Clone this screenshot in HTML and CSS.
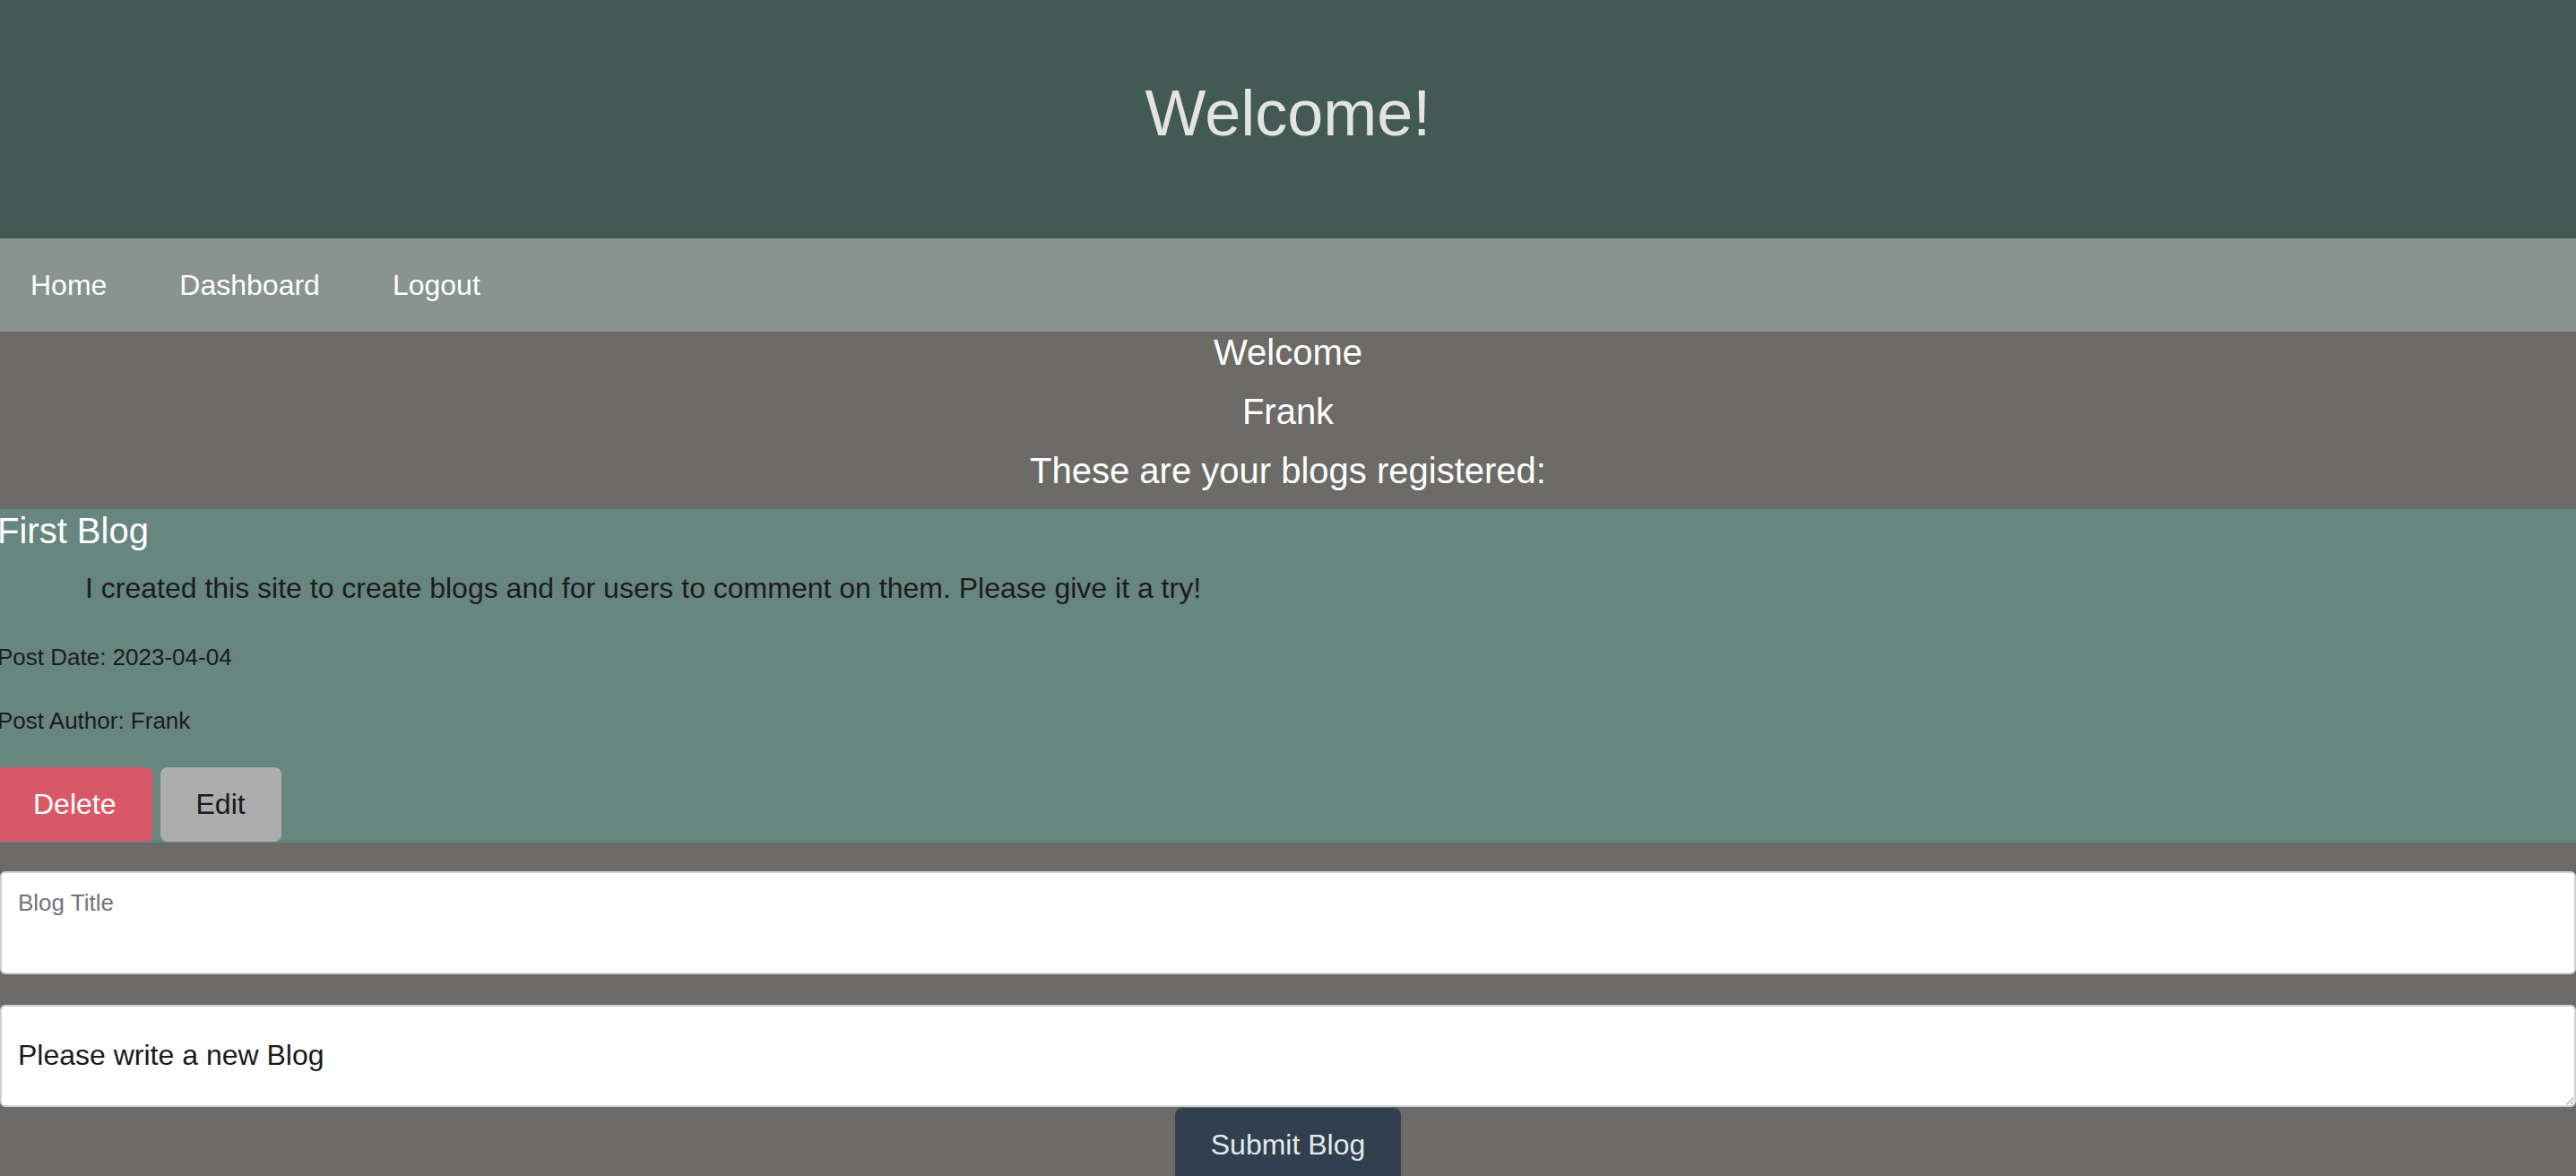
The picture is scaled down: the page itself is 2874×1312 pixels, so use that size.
FILE: index.html
```html
<!DOCTYPE html>
<html lang="en">
<head>
    <meta charset="UTF-8">
    <meta name="viewport" content="width=device-width, initial-scale=1.0">
    <title>Dashboard</title>
    <link rel="stylesheet" href="styles.css">
</head>
<body>
    <header class="site-header">
        <h1>Welcome!</h1>
    </header>

    <nav class="site-nav">
        <a href="#">Home</a>
        <a href="#">Dashboard</a>
        <a href="#">Logout</a>
    </nav>

    <section class="greeting">
        <h2>Welcome</h2>
        <h2>Frank</h2>
        <h2>These are your blogs registered:</h2>
    </section>

    <div class="blog-card">
        <div class="blog-inner">
            <h2 class="blog-title">First Blog</h2>
            <p class="blog-body">I created this site to create blogs and for users to comment on them. Please give it a try!</p>
            <p class="blog-meta date">Post Date: 2023-04-04</p>
            <p class="blog-meta author">Post Author: Frank</p>
            <div class="blog-actions">
                <button type="button" class="btn btn-delete">Delete</button>
                <button type="button" class="btn btn-edit">Edit</button>
            </div>
        </div>
    </div>

    <form class="new-blog">
        <input type="text" class="title-input" placeholder="Blog Title">
        <textarea class="body-input">Please write a new Blog</textarea>
        <button type="button" class="btn btn-submit">Submit Blog</button>
    </form>
</body>
</html>
```

FILE: styles.css
```css
body {
    margin: 0;
    font-family: "Liberation Sans", Arial, sans-serif;
    background-color: #6c6b67;
    overflow: hidden;
}
.site-header {
    background-color: #425a53;
    height: 266px;
    padding-top: 85px;
    box-sizing: border-box;
    text-align: center;
}
.site-header h1 {
    margin: 0;
    font-size: 72px;
    font-weight: normal;
    color: #e3e3e3;
}
.site-nav {
    display: flex;
    align-items: center;
    gap: 81px;
    height: 104px;
    padding-left: 34px;
    background-color: #89938f;
}
.site-nav a {
    color: white;
    font-size: 32px;
    text-decoration: none;
}
.greeting {
    text-align: center;
}
.greeting h2 {
    margin: 0 0 20px;
    font-size: 40px;
    font-weight: normal;
    line-height: 46px;
    color: white;
}
.blog-card {
    background-color: #66867f;
    padding: 1px 0 1px;
}
.blog-inner {
    margin-left: -3px;
}
.blog-title {
    margin: 0;
    font-size: 40px;
    font-weight: normal;
    line-height: 46px;
    color: white;
}
.blog-body {
    margin: 23px 0 0;
    padding-left: 98px;
    font-size: 32px;
    line-height: 37px;
    color: #1c1c1c;
}
.blog-meta {
    font-size: 26px;
    line-height: 30px;
    color: #1c1c1c;
}
.blog-meta.date {
    margin: 43px 0 0;
}
.blog-meta.author {
    margin: 41px 0 0;
}
.blog-actions {
    display: flex;
    gap: 9px;
    margin-top: 37px;
}
.btn {
    font-family: "Liberation Sans", Arial, sans-serif;
    font-size: 32px;
    line-height: 37px;
    padding: 23px 40px;
    border: none;
    border-radius: 8px;
    cursor: pointer;
}
.btn-delete {
    background-color: #d95868;
    color: white;
}
.btn-edit {
    background-color: #adadad;
    color: #1a1a1a;
}
.new-blog {
    display: flex;
    flex-direction: column;
    align-items: center;
    margin-top: 32px;
}
.title-input, .body-input {
    display: block;
    width: 100%;
    box-sizing: border-box;
    border: 2px solid #cfd3d7;
    border-radius: 6px;
    background: white;
    font-family: "Liberation Sans", Arial, sans-serif;
    color: #1a1a1a;
    margin: 0;
}
.title-input {
    height: 115px;
    padding: 19px 18px 63px;
    font-size: 26px;
}
.title-input::placeholder {
    color: #727476;
}
.body-input {
    height: 114px;
    margin-top: 34px;
    padding: 36px 18px 0;
    font-size: 32px;
    line-height: 37px;
    resize: vertical;
}
.btn-submit {
    margin-top: 1px;
    background-color: #323f4f;
    color: #e0eaec;
}
```
